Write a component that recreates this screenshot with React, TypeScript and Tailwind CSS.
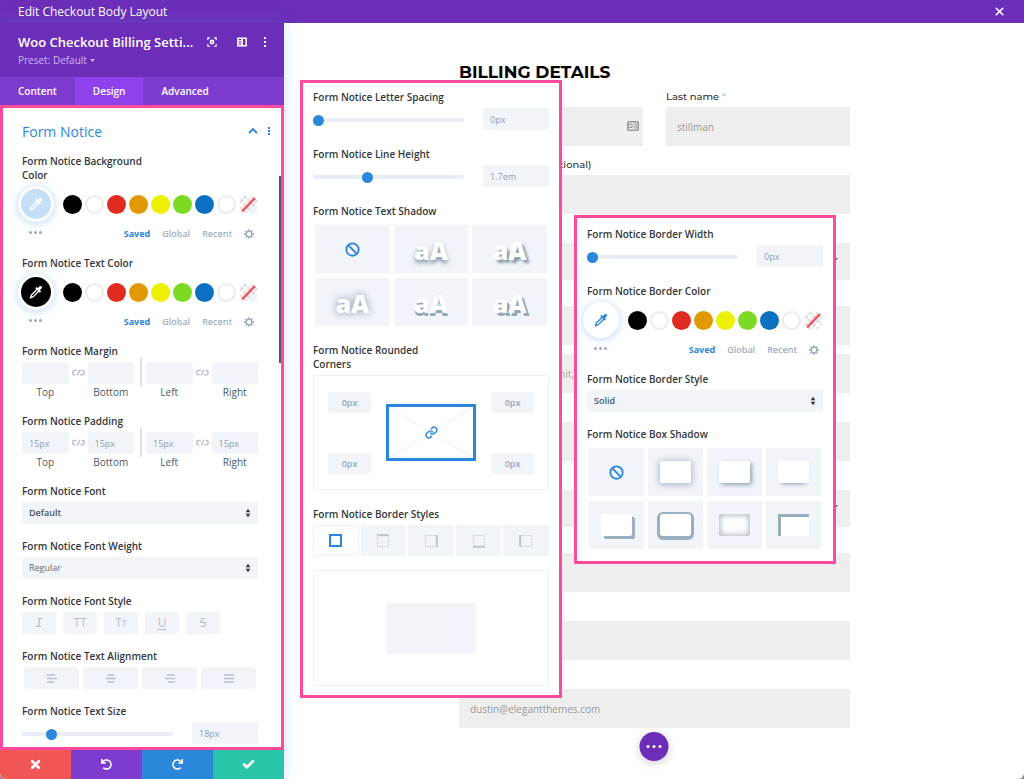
import { useId, type ReactNode } from 'react'
import { Check, Link as LinkIcon, X } from 'lucide-react'
import { FaRedo, FaUndo } from 'react-icons/fa'

const swatches = [
  { name: 'Black', className: 'bg-black' },
  { name: 'White', className: 'bg-white border-2 border-[#ececec]' },
  { name: 'Red', className: 'bg-[#e02b20]' },
  { name: 'Orange', className: 'bg-[#e09900]' },
  { name: 'Yellow', className: 'bg-[#edf000]' },
  { name: 'Green', className: 'bg-[#7cda24]' },
  { name: 'Blue', className: 'bg-[#0c71c3]' },
  { name: 'Plain white', className: 'bg-white border-2 border-[#ececec]' },
]

function Label({ htmlFor, children }: { htmlFor?: string; children: ReactNode }) {
  const className = 'block max-w-[140px] text-[10px] leading-[14px] font-semibold text-[#32373c]'
  return htmlFor ? (
    <label htmlFor={htmlFor} className={className}>{children}</label>
  ) : (
    <h3 className={className}>{children}</h3>
  )
}

function Dropper() {
  return (
    <svg viewBox="0 0 16 16" className="size-4" fill="none" stroke="currentColor">
      <path d="M9.2 5.2 3.6 10.8 2.2 14l3.1-1.4 5.6-5.6" strokeWidth="1.3" strokeLinejoin="round" />
      <path d="M7.2 4.3 8.5 3l1.3 1.1 1.6-1.6c1.6-1.5 3.7.6 2.1 2.1L11.9 6.2 13.1 7.6l-1.3 1.2z" fill="currentColor" stroke="none" />
    </svg>
  )
}

function Gear() {
  return (
    <svg viewBox="0 0 20 20" className="size-[10px]" fill="none" stroke="currentColor">
      <circle cx="10" cy="10" r="5.6" strokeWidth="2.6" />
      <path
        d="M10 0v4M10 16v4M0 10h4M16 10h4M2.9 2.9l2.8 2.8M14.3 14.3l2.8 2.8M2.9 17.1l2.8-2.8M14.3 5.7l2.8-2.8"
        strokeWidth="2.6"
      />
    </svg>
  )
}

function Unlinked() {
  return (
    <svg viewBox="0 0 14 8" className="mx-[3px] mt-[7px] h-2 w-[13px] shrink-0 text-[#b3bfca]" fill="none" stroke="currentColor" strokeWidth="1.5">
      <path d="M5.2 1.2H2.4Q.9 1.2.9 2.7v1.8q0 1.5 1.5 1.5h1.2M10.2 1.2h1.2q1.6 0 1.6 1.5v1.8q0 1.5-1.6 1.5H8.8" />
      <path d="M8.4.8 5.6 6.6" />
    </svg>
  )
}

function Forbidden() {
  return (
    <svg viewBox="0 0 16 16" className="size-[15px] text-[#2b87da]" fill="none" stroke="currentColor" strokeWidth="2">
      <circle cx="8" cy="8" r="6.6" />
      <path d="m3.4 3.4 9.2 9.2" />
    </svg>
  )
}

function ColorField({ label, tone }: { label: string; tone: string }) {
  return (
    <div>
      <Label>{label}</Label>
      <div className="mt-1 -ml-1 flex items-center">
        <button
          aria-label={`Pick ${label}`}
          className={`mr-[9px] flex size-9 shrink-0 items-center justify-center rounded-full border-[3px] border-white shadow-[0_1px_8px_rgba(43,135,218,0.35)] ${tone}`}
        >
          <Dropper />
        </button>
        <div className="flex gap-[3px]">
          {swatches.map((s) => (
            <button key={s.name} aria-label={s.name} className={`size-[19px] rounded-full ${s.className}`} />
          ))}
          <button
            aria-label="Transparent"
            className="size-[19px] overflow-hidden rounded-full bg-[conic-gradient(#e4e4e4_25%,#fff_0_50%,#e4e4e4_0_75%,#fff_0)] bg-[length:8px_8px]"
          >
            <svg viewBox="0 0 19 19" className="size-[19px]">
              <path d="M3 16.5 16 3" stroke="#f9495a" strokeWidth="2.4" />
            </svg>
          </button>
        </div>
      </div>
      <div className="mt-[5px] flex items-center gap-3 pr-1 text-[9px] leading-[14px] font-semibold text-[#a3b0c2]">
        <button aria-label="More colors" className="mr-auto mb-1 ml-[7px] flex gap-[2px]">
          <i className="size-[3px] rounded-full bg-[#98a8b8]" />
          <i className="size-[3px] rounded-full bg-[#98a8b8]" />
          <i className="size-[3px] rounded-full bg-[#98a8b8]" />
        </button>
        <button className="font-bold text-[#2b87da]">Saved</button>
        <button>Global</button>
        <button>Recent</button>
        <button aria-label="Palette settings" className="text-[#98a8b8]"><Gear /></button>
      </div>
    </div>
  )
}

function SliderField({ label, value, position }: { label: string; value: string; position: number }) {
  const id = useId()
  return (
    <div className="pb-0.5">
      <Label htmlFor={id}>{label}</Label>
      <div className="mt-1 flex items-center justify-between">
        <input
          id={id}
          type="range"
          defaultValue={position}
          className="mt-0.5 h-1 w-[151px] appearance-none rounded-full bg-[#e8eef5] [&::-webkit-slider-thumb]:size-[11px] [&::-webkit-slider-thumb]:appearance-none [&::-webkit-slider-thumb]:rounded-full [&::-webkit-slider-thumb]:bg-[#2b87da]"
        />
        <input
          aria-label={`${label} value`}
          defaultValue={value}
          className="h-[22px] w-[66px] rounded-[3px] bg-[#f1f4f9] px-[7px] text-[9px] font-medium text-[#8e9fb1]"
        />
      </div>
    </div>
  )
}

function SelectField({ label, value, tone }: { label: string; value: string; tone: string }) {
  const id = useId()
  return (
    <div>
      <Label htmlFor={id}>{label}</Label>
      <div className="relative mt-1">
        <select id={id} className={`block h-[22px] w-full appearance-none rounded-[3px] bg-[#f1f4f9] px-[7px] text-[9px] ${tone}`}>
          <option>{value}</option>
        </select>
        <svg viewBox="0 0 6 10" className="pointer-events-none absolute top-1.5 right-[7px] h-[10px] w-1.5 fill-[#32373c]">
          <path d="M3 .8 5.3 4.2H.7zM3 9.2.7 5.8h4.6z" />
        </svg>
      </div>
    </div>
  )
}

function Side({ group, name, value }: { group: string; name: string; value: string }) {
  return (
    <label className="flex min-w-0 flex-1 flex-col items-center gap-0.5 text-[10px] leading-[13px] font-medium text-[#4c5866]">
      <input
        aria-label={`${group} ${name}`}
        defaultValue={value}
        className="h-[22px] w-full rounded-[3px] bg-[#f1f4f9] px-[7px] text-[9px] font-medium text-[#8e9fb1]"
      />
      {name}
    </label>
  )
}

function SpacingField({ label, value }: { label: string; value: string }) {
  return (
    <div>
      <Label>{label}</Label>
      <div className="mt-1 flex items-start">
        <Side group={label} name="Top" value={value} />
        <Unlinked />
        <Side group={label} name="Bottom" value={value} />
        <i className="mr-1 ml-1.5 -mt-1 h-[29px] w-0.5 bg-[#dde3ea]" />
        <Side group={label} name="Left" value={value} />
        <Unlinked />
        <Side group={label} name="Right" value={value} />
      </div>
    </div>
  )
}

const fontStyles = [
  { name: 'Italic', node: <span className="font-['Liberation_Mono'] text-[13px] italic">I</span> },
  { name: 'Uppercase', node: <span>TT</span> },
  { name: 'Small caps', node: <span>T<span className="text-[9px]">T</span></span> },
  { name: 'Underline', node: <span className="underline underline-offset-2">U</span> },
  { name: 'Strikethrough', node: <span className="line-through">S</span> },
]

const alignments = [
  { name: 'Left', d: 'M0 1h8M0 4.5h10M0 8h7' },
  { name: 'Center', d: 'M1.5 1h7M0 4.5h10M1.5 8h7' },
  { name: 'Right', d: 'M2 1h8M0 4.5h10M3 8h7' },
  { name: 'Justify', d: 'M0 1h10M0 4.5h10M0 8h10' },
]

const textShadows = [
  '[text-shadow:0_3px_4px_#7f96a8]',
  '[text-shadow:3px_3px_3px_#7f96a8]',
  '[text-shadow:0_0_9px_#8195a6]',
  '[text-shadow:0_3px_0_#93a8b8]',
  '[text-shadow:3px_3px_0_#93a8b8]',
]

const boxShadows = [
  'rounded-[2px] shadow-[0_1px_6px_1px_#a9b8c6]',
  'rounded-[2px] shadow-[2px_2px_4px_#8fa3b4]',
  'rounded-[2px] shadow-[0_4px_4px_-3px_#8fa3b4]',
  'rounded-[2px] shadow-[3px_3px_0_#9aaebd]',
  'rounded-[3px] shadow-[0_1px_0_3px_#9aaebd]',
  'rounded-[2px] shadow-[inset_0_0_6px_1px_#a9b3bc]',
  'shadow-[inset_3px_3px_0_#9aaebd]',
]

const borderTabs = ['Top', 'Right', 'Bottom', 'Left']
const borderEdges = ['M1 1.2h12', 'M12.8 1v12', 'M1 12.8h12', 'M1.2 1v12']

function Sidebar() {
  return (
    <aside className="relative z-10 flex w-[284px] shrink-0 flex-col bg-white shadow-[0_0_14px_rgba(70,140,200,0.25)]">
      <div className="flex h-[54px] flex-col justify-center bg-[#6c2eb9] px-[18px] pt-0.5 text-white">
        <div className="flex items-center">
          <h2 className="mr-auto text-[13px] leading-[18px] font-semibold">Woo Checkout Billing Setti...</h2>
          <button aria-label="Expand">
            <svg viewBox="0 0 12 12" className="size-[10px]" fill="none" stroke="currentColor" strokeWidth="1.3">
              <path d="M1 3.6V1h2.6M8.4 1H11v2.6M11 8.4V11H8.4M3.6 11H1V8.4" />
              <circle cx="6" cy="6" r="1.9" strokeWidth="2" />
            </svg>
          </button>
          <button aria-label="Snap to side" className="ml-5">
            <svg viewBox="0 0 12 12" className="size-[10px]" fill="none" stroke="currentColor" strokeWidth="1.8">
              <path d="M1 1.4h10v9.2H1zM6.2 1v10" />
              <path d="M1 4.2h5M1 6.2h5M1 8.2h5" strokeWidth="1" />
            </svg>
          </button>
          <button aria-label="More options" className="ml-[17px] flex flex-col gap-0.5">
            <i className="size-0.5 bg-white" />
            <i className="size-0.5 bg-white" />
            <i className="size-0.5 bg-white" />
          </button>
        </div>
        <button className="flex items-center gap-[3px] self-start text-[10px] leading-[18px] text-[#cdb6ec]">
          Preset: Default
          <svg viewBox="0 0 6 4" className="h-[3px] w-[5px] fill-current"><path d="M0 0h6L3 4z" /></svg>
        </button>
      </div>
      <nav className="flex h-7 bg-[#7e3bd0] text-[10px] font-semibold text-white">
        <button className="px-[18px]">Content</button>
        <button className="bg-[#8f42ec] px-[18px]">Design</button>
        <button className="px-[18px]">Advanced</button>
      </nav>
      <div className="relative min-h-0 flex-1 overflow-hidden border-[3px] border-[#ff4a9e] pr-[23px] pl-[19px]">
        <i className="absolute top-[68px] right-0 h-[187px] w-0.5 bg-[#4c5866]" />
        <div className="-mr-3 flex h-[46px] items-center text-[#2b87da]">
          <h2 className="mr-auto text-[14px]">Form Notice</h2>
          <button aria-label="Collapse">
            <svg viewBox="0 0 10 6" className="h-[6px] w-[10px]" fill="none" stroke="currentColor" strokeWidth="1.8">
              <path d="m1 5 4-4 4 4" />
            </svg>
          </button>
          <button aria-label="Group options" className="ml-[10px] flex flex-col gap-px">
            <i className="size-0.5 bg-[#2b87da]" />
            <i className="size-0.5 bg-[#2b87da]" />
            <i className="size-0.5 bg-[#2b87da]" />
          </button>
        </div>
        <div className="flex flex-col gap-[15px]">
          <ColorField label="Form Notice Background Color" tone="bg-[#c5e0f6] text-white" />
          <ColorField label="Form Notice Text Color" tone="bg-black text-white" />
          <SpacingField label="Form Notice Margin" value="" />
          <SpacingField label="Form Notice Padding" value="15px" />
          <SelectField label="Form Notice Font" value="Default" tone="font-semibold text-[#4c5866]" />
          <SelectField label="Form Notice Font Weight" value="Regular" tone="text-[#646d77]" />
          <div>
            <Label>Form Notice Font Style</Label>
            <div className="mt-1 flex gap-[7px] text-[12px] leading-none text-[#b5c0cc]">
              {fontStyles.map((f) => (
                <button key={f.name} aria-label={f.name} className="h-[22px] w-[34px] rounded-[3px] bg-[#f1f4f9]">{f.node}</button>
              ))}
            </div>
          </div>
          <div>
            <Label>Form Notice Text Alignment</Label>
            <div className="mt-1 grid grid-cols-4 gap-1 px-0.5">
              {alignments.map((a) => (
                <button key={a.name} aria-label={a.name} className="flex h-[22px] items-center justify-center rounded-[3px] bg-[#f1f4f9]">
                  <svg viewBox="0 0 10 9" className="h-[9px] w-[10px]" stroke="#b5c0cc" strokeWidth="1.3"><path d={a.d} /></svg>
                </button>
              ))}
            </div>
          </div>
          <SliderField label="Form Notice Text Size" value="18px" position={17} />
        </div>
      </div>
      <div className="grid h-[29px] grid-cols-4 text-white">
        <button aria-label="Discard" className="flex items-center justify-center bg-[#f15555]"><X size={13} strokeWidth={5} /></button>
        <button aria-label="Undo" className="flex items-center justify-center bg-[#7e3bd0]"><FaUndo size={11} /></button>
        <button aria-label="Redo" className="flex items-center justify-center bg-[#2b87da]"><FaRedo size={11} /></button>
        <button aria-label="Save" className="flex items-center justify-center bg-[#29c4a9]"><Check size={13} strokeWidth={5} /></button>
      </div>
    </aside>
  )
}

function Corner({ name }: { name: string }) {
  return (
    <input
      aria-label={`${name} corner radius`}
      defaultValue="0px"
      className="h-[21px] w-[43px] rounded-[3px] bg-[#f1f4f9] text-center text-[9px] font-semibold text-[#98a7b8]"
    />
  )
}

function TextPanel() {
  return (
    <section className="absolute top-[57px] left-4 flex w-[262px] flex-col gap-[15px] border-[3px] border-[#ff4a9e] bg-white px-[10px] pt-[7px] pb-[9px]">
      <SliderField label="Form Notice Letter Spacing" value="0px" position={0} />
      <SliderField label="Form Notice Line Height" value="1.7em" position={35} />
      <div className="pb-0.5">
        <Label>Form Notice Text Shadow</Label>
        <div className="mt-[7px] grid grid-cols-3 gap-x-1 gap-y-[5px] px-0.5">
          <button aria-label="No text shadow" className="flex h-12 items-center justify-center bg-[#f1f4f9]"><Forbidden /></button>
          {textShadows.map((shadow) => (
            <button key={shadow} className={`h-12 bg-[#f1f4f9] pt-0.5 text-[25px] leading-none font-extrabold text-white ${shadow}`}>aA</button>
          ))}
        </div>
      </div>
      <div className="pb-0.5">
        <Label>Form Notice Rounded Corners</Label>
        <div className="mt-1 flex h-[115px] items-center justify-between rounded-[2px] border border-[#eef2f8] px-[14px]">
          <div className="flex flex-col gap-10"><Corner name="Top left" /><Corner name="Bottom left" /></div>
          <button aria-label="Link corners" className="relative flex h-[57px] w-[90px] items-center justify-center border-[3px] border-[#2b87da] text-[#2b87da]">
            <svg viewBox="0 0 84 51" className="absolute inset-0 size-full" stroke="#eef2f8" strokeWidth="1.2">
              <path d="m0 0 32 20M84 0 52 20M0 51l32-20M84 51 52 31" />
            </svg>
            <LinkIcon size={13} strokeWidth={2.6} />
          </button>
          <div className="flex flex-col gap-10"><Corner name="Top right" /><Corner name="Bottom right" /></div>
        </div>
      </div>
      <div>
        <Label>Form Notice Border Styles</Label>
        <div className="mt-1 grid h-[31px] grid-cols-5 gap-0.5">
          <button aria-label="All borders" className="flex items-center justify-center rounded-[2px] border border-[#eef2f8]">
            <i className="size-[13px] border-2 border-[#2b87da]" />
          </button>
          {borderTabs.map((name, i) => (
            <button key={name} aria-label={`${name} border`} className="flex items-center justify-center bg-[#f1f4f9]">
              <svg viewBox="0 0 14 14" className="size-[14px]" fill="none" stroke="#bcc6cc">
                <path d="M1.5 1.5h11v11h-11z" strokeDasharray="1.4 1.35" />
                <path d={borderEdges[i]} strokeWidth="2" />
              </svg>
            </button>
          ))}
        </div>
        <div className="mt-[14px] flex h-[116px] items-center justify-center rounded-[2px] border border-[#eef2f8]">
          <i className="h-[51px] w-[90px] bg-[#f1f4f9]" />
        </div>
      </div>
    </section>
  )
}

function BorderPanel() {
  return (
    <section className="absolute top-[192px] left-[290px] flex w-[262px] flex-col gap-[15px] border-[3px] border-[#ff4a9e] bg-white px-[10px] pt-[9px] pb-3">
      <SliderField label="Form Notice Border Width" value="0px" position={0} />
      <ColorField label="Form Notice Border Color" tone="bg-white text-[#2b87da]" />
      <SelectField label="Form Notice Border Style" value="Solid" tone="font-semibold text-[#4c5866]" />
      <div>
        <Label>Form Notice Box Shadow</Label>
        <div className="mt-[7px] grid grid-cols-4 gap-x-1 gap-y-[5px] px-0.5">
          <button aria-label="No box shadow" className="flex h-12 items-center justify-center bg-[#f1f4f9]"><Forbidden /></button>
          {boxShadows.map((shadow, i) => (
            <button key={shadow} aria-label={`Box shadow ${i + 1}`} className="flex h-12 items-center justify-center bg-[#f1f4f9]">
              <i className={`h-[22px] w-[31px] bg-white ${shadow}`} />
            </button>
          ))}
        </div>
      </div>
    </section>
  )
}

function FormField({ label, value, required }: { label: string; value?: string; required?: boolean }) {
  const id = useId()
  return (
    <div className="mb-3">
      <label htmlFor={id} className="block font-['Montserrat','Inter',sans-serif] text-[10px] leading-[14px] font-medium text-[#333]">
        {label} {required && <span className="text-[#a9d3f5]">*</span>}
      </label>
      <input id={id} defaultValue={value} className="mt-[3px] block h-[39px] w-full bg-[#eee] px-[11px] text-[10px] text-[#999]" />
    </div>
  )
}

// Same slot as FormField, for rows whose caption sits under the panels
function BareField({ name, value }: { name: string; value?: string }) {
  return (
    <div className="mb-3 pt-[17px]">
      <input aria-label={name} defaultValue={value} className="block h-[39px] w-full bg-[#eee] px-[11px] text-[10px] text-[#999]" />
    </div>
  )
}

function BareSelect({ name }: { name: string }) {
  return (
    <div className="relative mb-[9px] pt-[17px]">
      <select aria-label={name} className="block h-[37px] w-full appearance-none bg-[#eee]" />
      <svg viewBox="0 0 6 4" className="absolute right-3 bottom-[18px] h-1 w-1.5 fill-[#666]"><path d="M0 0h6L3 4z" /></svg>
    </div>
  )
}

export default function App() {
  return (
    <div className="bg-[#8a8a90] font-['Open_Sans',sans-serif]">
      <div className="flex h-screen flex-col overflow-hidden rounded-b-[6px] bg-white">
        <header className="flex h-[23px] shrink-0 items-center justify-between bg-[#6c2eb9] px-[18px] text-white">
          <h1 className="text-[12px] font-medium">Edit Checkout Body Layout</h1>
          <button aria-label="Close"><X size={13} strokeWidth={3} /></button>
        </header>
        <div className="flex min-h-0 flex-1">
          <Sidebar />
          <main className="relative min-w-0 flex-1">
            <form className="pt-[37px] pr-[174px] pl-[175px]">
              <h2 className="mb-1.5 font-['Montserrat','Inter',sans-serif] text-[17px] leading-6 font-bold text-black">BILLING DETAILS</h2>
              <div className="grid grid-cols-2 gap-x-[23px]">
                <div className="relative">
                  <BareField name="First name" />
                  <svg viewBox="0 0 12 10" className="absolute right-1 bottom-[27px] h-[10px] w-3" fill="none" stroke="#999">
                    <rect x=".8" y=".8" width="10.4" height="8.4" rx="1" strokeWidth="1.5" />
                    <path d="M2 3h3v3.5H2zM6.5 3h4M6.5 5h4M6.5 7h4" />
                  </svg>
                </div>
                <FormField label="Last name" value="stillman" required />
              </div>
              <FormField label="Company name (optional)" />
              <BareSelect name="Country" />
              <BareField name="Street address" />
              <input
                aria-label="Apartment"
                placeholder="Apartment, suite, unit,"
                className="-mt-[3px] mb-3 block h-[39px] w-full bg-[#eee] px-[11px] text-[10px] placeholder:text-[#aaa]"
              />
              <BareField name="City" />
              <BareSelect name="State" />
              <BareField name="ZIP" />
              <BareField name="Phone" />
              <BareField name="Email" value="dustin@elegantthemes.com" />
            </form>
            <TextPanel />
            <BorderPanel />
            <button
              aria-label="Page options"
              className="absolute bottom-[18px] left-1/2 flex size-[29px] -translate-x-1/2 items-center justify-center gap-[3px] rounded-full bg-[#6c2eb9] shadow-[0_2px_8px_rgba(60,60,100,0.25)]"
            >
              <i className="size-[3px] rounded-full bg-white" />
              <i className="size-[3px] rounded-full bg-white" />
              <i className="size-[3px] rounded-full bg-white" />
            </button>
          </main>
        </div>
      </div>
    </div>
  )
}
